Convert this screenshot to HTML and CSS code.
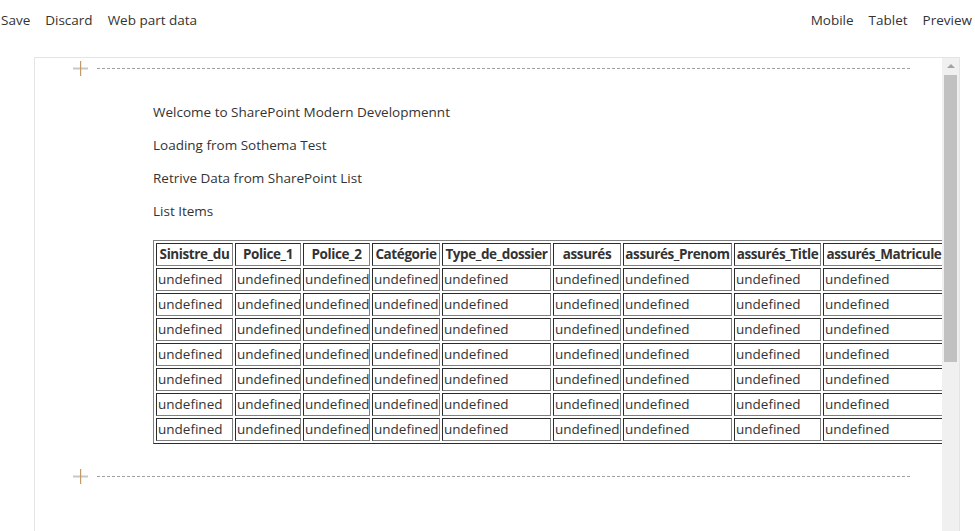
FILE: index.html
```html
<!DOCTYPE html>
<html lang="en">
<head>
  <meta charset="UTF-8">
  <title>Workbench</title>
  <link rel="stylesheet" href="styles.css">
</head>
<body>
  <header class="toolbar">
    <nav class="toolbar-group">
      <span class="toolbar-item">Save</span>
      <span class="toolbar-item">Discard</span>
      <span class="toolbar-item">Web part data</span>
    </nav>
    <nav class="toolbar-group">
      <span class="toolbar-item">Mobile</span>
      <span class="toolbar-item">Tablet</span>
      <span class="toolbar-item">Preview</span>
    </nav>
  </header>

  <div class="canvas">
    <div class="canvas-content">
      <div class="zone-hint">
        <svg class="zone-plus" width="16" height="15" viewBox="0 0 16 15">
          <rect x="0" y="6.5" width="15" height="2" fill="#c8c8c8"/>
          <rect x="7" y="0" width="1.2" height="15" fill="#c29a66"/>
        </svg>
        <span class="zone-line"></span>
      </div>

      <section class="webpart">
        <p>Welcome to SharePoint Modern Developmennt</p>
        <p>Loading from Sothema Test</p>
        <p>Retrive Data from SharePoint List</p>
        <p>List Items</p>

        <table class="items">
          <colgroup>
            <col class="w77"><col class="w66"><col class="w67"><col class="w68"><col class="w109">
            <col class="w68"><col class="w109"><col class="w87"><col class="w122">
          </colgroup>
          <thead>
            <tr>
              <th>Sinistre_du</th><th>Police_1</th><th>Police_2</th><th>Catégorie</th><th>Type_de_dossier</th>
              <th>assurés</th><th>assurés_Prenom</th><th>assurés_Title</th><th>assurés_Matricule</th>
            </tr>
          </thead>
          <tbody id="rows"></tbody>
        </table>
      </section>

      <div class="zone-hint zone-hint-bottom">
        <svg class="zone-plus" width="16" height="15" viewBox="0 0 16 15">
          <rect x="0" y="6.5" width="15" height="2" fill="#c8c8c8"/>
          <rect x="7" y="0" width="1.2" height="15" fill="#c29a66"/>
        </svg>
        <span class="zone-line"></span>
      </div>
    </div>

    <div class="scrollbar">
      <span class="scroll-arrow"></span>
      <span class="scroll-thumb"></span>
    </div>
  </div>

  <script>
    // fill the list rows (every field comes back undefined)
    const body = document.getElementById('rows');
    let html = '';
    for (let i = 0; i < 7; i++) {
      html += '<tr>';
      for (let j = 0; j < 9; j++) {
        html += '<td>undefined</td>';
      }
      html += '</tr>';
    }
    body.innerHTML = html;
  </script>
</body>
</html>
```

FILE: styles.css
```css
body {
  font-family: 'Open Sans', 'Noto Sans', sans-serif;
  font-size: 13.5px;
  margin: 0;
  color: #333;
  background-color: #ffffff;
  overflow: hidden;
}
.toolbar {
  display: flex;
  justify-content: space-between;
  height: 40px;
  line-height: 40px;
  padding: 0 3px 0 1px;
}
.toolbar-group {
  display: flex;
  gap: 15px;
}
.toolbar-item {
  color: #333;
  cursor: pointer;
}
.canvas {
  display: flex;
  margin: 17px 0 0 34px;
  width: 924px;
  height: 500px;
  border: 1px solid #e4e4e4;
  border-bottom: none;
}
.canvas-content {
  flex: 1;
  overflow: hidden;
}
.zone-hint {
  display: flex;
  align-items: center;
  height: 15px;
  margin-top: 3px;
  padding: 0 30px 0 38px;
}
.zone-hint-bottom {
  margin-top: 25px;
}
.zone-plus {
  flex: none;
  margin-right: 8px;
}
.zone-line {
  flex: 1;
  height: 1px;
  background-image: repeating-linear-gradient(to right, #a0a0a0 0 3px, transparent 3px 5px);
}
.webpart {
  padding: 27px 0 0 118px;
}
.webpart p {
  margin: 0 0 14px;
  line-height: 19px;
  white-space: nowrap;
}
.items {
  table-layout: fixed;
  width: 795px;
  margin-top: 19px;
  border: 1px outset grey;
  border-spacing: 2px;
  white-space: nowrap;
}
.items th,
.items td {
  border: 1px inset grey;
  padding: 1px;
  line-height: 19px;
  overflow: hidden;
}
.items th {
  font-weight: bold;
  text-align: center;
  letter-spacing: -0.4px;
}
.items td {
  text-align: left;
}
.w66 { width: 66px; }
.w67 { width: 67px; }
.w68 { width: 68px; }
.w77 { width: 77px; }
.w87 { width: 87px; }
.w109 { width: 109px; }
.w122 { width: 122px; }
.scrollbar {
  flex: none;
  width: 17px;
  background-color: #f0f0f0;
  display: flex;
  flex-direction: column;
  align-items: center;
}
.scroll-arrow {
  margin-top: 6px;
  border-left: 4px solid transparent;
  border-right: 4px solid transparent;
  border-bottom: 4px solid #a3a3a3;
}
.scroll-thumb {
  margin-top: 7px;
  width: 13px;
  height: 287px;
  background-color: #c1c1c1;
}
```
